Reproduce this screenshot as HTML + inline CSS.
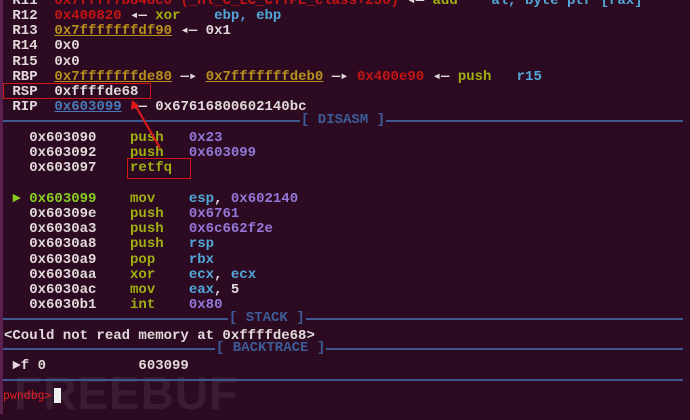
<!DOCTYPE html>
<html><head><meta charset="utf-8"><style>
body{margin:0;width:690px;height:414px;overflow:hidden;background:#2c0a22;position:relative;font-family:"Liberation Mono","DejaVu Sans Mono",monospace;}
.strip{position:absolute;left:0;top:0;width:3px;height:414px;background:#5a2050}
#t{position:absolute;left:4px;top:-6.3px;margin:0;font-size:14px;color:#e2dada;font-weight:bold}
#t div{height:15.24px;line-height:15.24px;white-space:pre;overflow:visible}
.r{color:#c41414}.y{color:#9fb010}.b{color:#52a8d8}.p{color:#9478d8}.g{color:#b8901c;text-decoration:underline}.u{color:#4a78b8;text-decoration:underline}.gr{color:#88d020}
.sep{position:absolute;left:3px;width:680px;height:15px;}
.sep .ln{position:absolute;left:0;right:0;top:7px;height:2px;background:#3a5a90}
.sep .lb{position:absolute;top:-1px;background:#2c0a22;color:#3c5e98;font-size:14px;padding:0 1px;font-weight:bold}
.box{position:absolute;border:1.5px solid #d01818}
.wm{position:absolute;left:14px;top:366px;font-family:"Liberation Sans",sans-serif;font-weight:bold;font-size:46px;color:rgba(255,255,255,0.07);letter-spacing:1px}
.cur{position:absolute;left:54px;top:388px;width:7px;height:15px;background:#f0f0f0}
.pw{position:absolute;left:3px;top:388px;font-size:11.5px;line-height:15px;color:#e02020;font-family:"DejaVu Sans Mono",monospace}
</style></head><body>
<div class="strip"></div>
<div class="wm">FREEBUF</div>
<div id="t">
<div> R11  <span class="r">0x7ffff7b848c0 (_nl_C_LC_CTYPE_class+256)</span> ◂— <span class="y">add</span>    <span class="b">al, byte ptr [rax]</span></div>
<div> R12  <span class="r">0x400820</span> ◂— <span class="y">xor</span>    <span class="b">ebp, ebp</span></div>
<div> R13  <span class="g">0x7fffffffdf90</span> ◂— 0x1</div>
<div> R14  0x0</div>
<div> R15  0x0</div>
<div> RBP  <span class="g">0x7fffffffde80</span> —▸ <span class="g">0x7fffffffdeb0</span> —▸ <span class="r">0x400e90</span> ◂— <span class="y">push</span>   <span class="b">r15</span></div>
<div> RSP  0xffffde68</div>
<div> RIP  <span class="u">0x603099</span> ◂— 0x67616800602140bc</div>
<div> </div>
<div>   0x603090    <span class="y">push</span>   <span class="p">0x23</span></div>
<div>   0x603092    <span class="y">push</span>   <span class="p">0x603099</span></div>
<div>   0x603097    <span class="y">retfq</span></div>
<div> </div>
<div> <span class="gr">► 0x603099</span>    <span class="y">mov</span>    <span class="b">esp</span>, <span class="p">0x602140</span></div>
<div>   0x60309e    <span class="y">push</span>   <span class="p">0x6761</span></div>
<div>   0x6030a3    <span class="y">push</span>   <span class="p">0x6c662f2e</span></div>
<div>   0x6030a8    <span class="y">push</span>   <span class="b">rsp</span></div>
<div>   0x6030a9    <span class="y">pop</span>    <span class="b">rbx</span></div>
<div>   0x6030aa    <span class="y">xor</span>    <span class="b">ecx</span>, <span class="b">ecx</span></div>
<div>   0x6030ac    <span class="y">mov</span>    <span class="b">eax</span>, 5</div>
<div>   0x6030b1    <span class="y">int</span>    <span class="p">0x80</span></div>
<div> </div>
<div>&lt;Could not read memory at 0xffffde68&gt;</div>
<div> </div>
<div> ►f 0           603099</div>
</div>
<div class="pw">pwndbg&gt;</div>
<div class="sep" style="top:113px"><div class="ln"></div><div class="lb" style="left:297px">[ DISASM ]</div></div>
<div class="sep" style="top:311px"><div class="ln"></div><div class="lb" style="left:225px">[ STACK ]</div></div>
<div class="sep" style="top:341px"><div class="ln"></div><div class="lb" style="left:212px">[ BACKTRACE ]</div></div>
<div class="sep" style="top:372px"><div class="ln"></div></div>
<div class="box" style="left:3px;top:83px;width:146px;height:14px"></div>
<div class="box" style="left:127px;top:158px;width:62px;height:19px"></div>
<svg style="position:absolute;left:0;top:0" width="690" height="414"><line x1="160" y1="148" x2="134" y2="103" stroke="#e01818" stroke-width="2"/><polygon points="132,100 131,110 139,106" fill="#e01818"/></svg>
<div class="cur"></div>
</body></html>
